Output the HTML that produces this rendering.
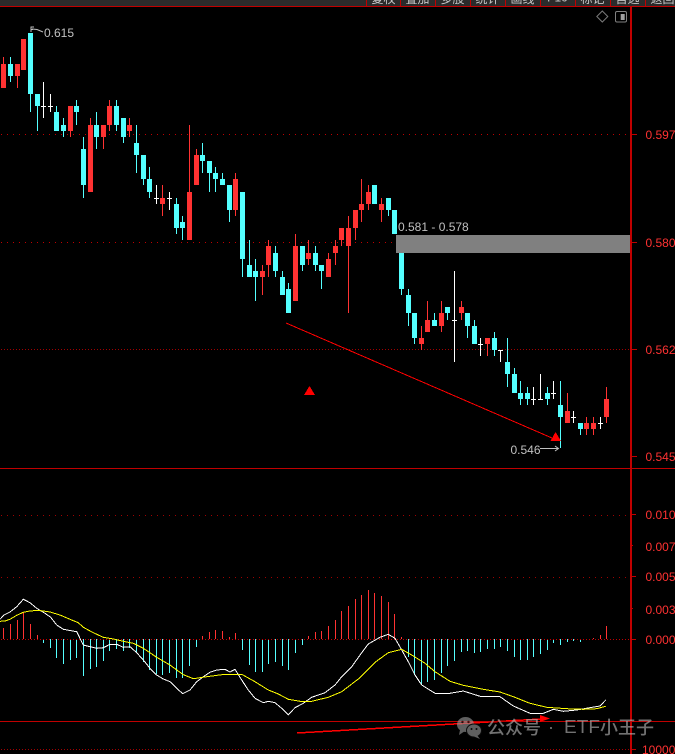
<!DOCTYPE html>
<html>
<head>
<meta charset="utf-8">
<style>
html,body{margin:0;padding:0;background:#000;width:675px;height:754px;overflow:hidden}
svg{display:block}
text{font-family:"Liberation Sans","Noto Sans CJK SC",sans-serif}
</style>
</head>
<body>
<svg width="675" height="754" viewBox="0 0 675 754" xmlns="http://www.w3.org/2000/svg">
<rect width="675" height="754" fill="#000"/>
<!-- top bar -->
<rect width="675" height="6" fill="#2b2b2b"/>
<g font-size="12" fill="#c8c8c8" text-anchor="middle">
<text x="383.5" y="3">复权</text>
<text x="417.5" y="3">叠加</text>
<text x="452.5" y="3">多股</text>
<text x="487.5" y="3">统计</text>
<text x="522.5" y="3">画线</text>
<text x="557.5" y="1.5">F10</text>
<text x="592.5" y="3">标记</text>
<text x="627.5" y="3">自选</text>
<text x="662.5" y="3">返回</text>
</g>
<rect y="6" width="675" height="748" fill="#000"/>
<g shape-rendering="crispEdges">
<rect y="6" width="675" height="1" fill="#c00000"/>
<path d="M366.5 0V6M400.5 0V6M435.5 0V6M470.5 0V6M505.5 0V6M540.5 0V6M575.5 0V6M610.5 0V6M645.5 0V6" stroke="#c00000" fill="none"/>
<!-- grids -->
<g fill="none" stroke="#c00000">
<path d="M1 134.5H630M1 242.5H396" stroke-dasharray="1 5"/>
<path d="M1 349.5H630" stroke-dasharray="1 2" stroke="#a00000"/>
<path d="M1 515.5H630M1 577.5H630" stroke-dasharray="1 5" stroke="#a00000"/>
<path d="M1 749.5H630" stroke-dasharray="1 2" stroke="#a00000"/>
</g>
<!-- grey zone -->
<rect x="396" y="235" width="234" height="18" fill="#808080"/>
<!-- red wicks -->
<path fill="none" stroke="#ff3232" stroke-width="1" d="M3.5 57V88M17.5 64V88M70.5 106V137M90.5 118V192M103.5 125V149M109.5 100V131M129.5 118V137M162.5 185V216M189.5 125V240M196.5 149V185M235.5 173V216M262.5 265V295M268.5 240V277M295.5 234V301M308.5 240V265M328.5 253V277M335.5 240V265M341.5 228V246M348.5 216V313M355.5 210V240M361.5 179V222M368.5 185V210M381.5 198V222M421.5 326V350M427.5 301V332M441.5 301V332M461.5 301V320M487.5 338V356M567.5 393V423M586.5 417V435M593.5 417V435M606.5 387V423"/>
<!-- red bodies -->
<path fill="none" stroke="#ff3232" stroke-width="5" d="M3.5 64V88M17.5 64V76M23.5 39V70M70.5 106V131M90.5 125V192M103.5 125V137M109.5 106V125M129.5 125V131M162.5 198V204M189.5 192V240M196.5 155V185M235.5 179V210M262.5 271V277M268.5 246V265M295.5 246V301M308.5 253V259M328.5 259V277M335.5 246V253M341.5 228V240M348.5 228V246M355.5 210V228M361.5 204V210M368.5 192V204M381.5 204V210M421.5 338V344M427.5 320V332M441.5 313V326M461.5 307V313M487.5 338V344M567.5 411V423M586.5 423V429M593.5 423V429M606.5 399V417"/>
<!-- cyan wicks -->
<path fill="none" stroke="#54ffff" stroke-width="1" d="M10.5 57V82M30.5 33V112M37.5 94V131M56.5 106V131M63.5 118V137M76.5 100V125M83.5 137V198M96.5 112V149M116.5 100V131M123.5 118V143M136.5 125V173M143.5 155V185M149.5 167V198M176.5 198V234M182.5 216V240M202.5 143V173M209.5 161V192M215.5 167V192M222.5 173V185M229.5 185V222M242.5 192V277M249.5 240V277M255.5 259V301M275.5 246V277M282.5 271V295M288.5 283V313M302.5 246V271M315.5 246V271M321.5 265V289M374.5 185V204M388.5 198V216M394.5 210V234M401.5 253V295M408.5 289V326M414.5 313V344M434.5 313V326M447.5 307V320M467.5 313V338M474.5 320V344M494.5 332V356M507.5 338V387M514.5 368V393M520.5 381V405M527.5 387V405M547.5 387V405M560.5 381V448M580.5 423V435"/>
<!-- cyan bodies -->
<path fill="none" stroke="#54ffff" stroke-width="5" d="M10.5 64V76M30.5 33V94M37.5 94V106M56.5 112V131M63.5 125V131M76.5 106V112M83.5 149V185M96.5 125V137M116.5 106V125M123.5 118V137M136.5 143V155M143.5 155V179M149.5 179V192M176.5 204V228M182.5 222V228M202.5 155V161M209.5 161V173M215.5 173V179M222.5 179V185M229.5 185V210M242.5 192V259M249.5 265V277M255.5 271V277M275.5 253V271M282.5 277V295M288.5 289V313M302.5 246V265M315.5 253V265M321.5 265V271M374.5 185V204M388.5 198V210M394.5 210V234M401.5 253V289M408.5 295V313M414.5 313V338M434.5 320V326M447.5 307V313M467.5 313V326M474.5 326V344M494.5 338V350M507.5 362V374M514.5 374V393M520.5 393V399M527.5 393V399M547.5 393V399M560.5 405V417M580.5 423V429"/>
<!-- white doji -->
<path fill="none" stroke="#ffffff" stroke-width="1" d="M43.5 82V118M41 106.5H46M50.5 94V112M48 106.5H53M156.5 185V204M154 198.5H159M169.5 192V210M167 198.5H172M454.5 271V362M452 320.5H457M480.5 338V356M478 344.5H483M500.5 350V362M498 350.5H503M533.5 387V405M531 399.5H536M540.5 374V400M538 399.5H543M553.5 381V399M551 393.5H556M573.5 411V423M571 417.5H576M600.5 417V429M598 423.5H603"/>
<!-- trend line -->
<path fill="none" stroke="#ff0000" d="M286 323L552 438"/>
<path fill="#ff0000" d="M555.5 432L561 441H550.5ZM309.5 386L315 395H304Z"/>
<!-- MACD histogram -->
<path fill="none" stroke="#ff3232" d="M3.5 628V639M10.5 624V639M17.5 620V639M23.5 612V639M30.5 624V639M37.5 635V639M202.5 636V639M209.5 632V639M215.5 630V639M222.5 631V639M229.5 637V639M235.5 633V639M308.5 636V639M315.5 632V639M321.5 631V639M328.5 626V639M335.5 620V639M341.5 611V639M348.5 606V639M355.5 599V639M361.5 595V639M368.5 590V639M374.5 593V639M381.5 596V639M388.5 602V639M394.5 614V639M401.5 637V639M593.5 638V639M600.5 635V639M606.5 626V639"/>
<path fill="none" stroke="#54ffff" d="M43.5 639V643M50.5 639V648M56.5 639V658M63.5 639V664M70.5 639V660M76.5 639V658M83.5 639V676M90.5 639V669M96.5 639V667M103.5 639V661M109.5 639V651M116.5 639V649M123.5 639V651M129.5 639V648M136.5 639V653M143.5 639V662M149.5 639V670M156.5 639V674M162.5 639V675M169.5 639V673M176.5 639V678M182.5 639V678M189.5 639V666M196.5 639V647M242.5 639V650M249.5 639V665M255.5 639V672M262.5 639V672M268.5 639V664M275.5 639V662M282.5 639V666M288.5 639V670M295.5 639V653M302.5 639V645M408.5 639V657M414.5 639V675M421.5 639V685M427.5 639V682M434.5 639V680M441.5 639V673M447.5 639V666M454.5 639V661M461.5 639V652M467.5 639V651M474.5 639V653M480.5 639V652M487.5 639V649M494.5 639V649M500.5 639V647M507.5 639V651M514.5 639V657M520.5 639V660M527.5 639V660M533.5 639V657M540.5 639V654M547.5 639V650M553.5 639V643M560.5 639V645M567.5 639V642M573.5 639V641M580.5 639V642"/>
<path d="M1 639.5H630" fill="none" stroke="#c00000" stroke-dasharray="1 2"/>
<!-- white DIF line -->
<polyline fill="none" stroke="#ffffff" points="0,619.3 4,615 10,612 16.7,606.7 23.3,599.3 30,602.7 36.7,608.3 45,613.3 50.7,617.3 56.7,625 63.3,629.3 76.7,631.7 83.3,645 90,646.7 96.7,648.3 103.3,647.7 110,644.3 116.7,644.3 123.3,647.3 130,646.7 136.7,652.7 143.3,660 150,668.3 156.7,675 163.3,679 170,681.7 176.7,688.3 182.7,693.7 190,690 196.7,681.7 203.3,676.7 210,672.3 216.7,670 225,669.3 230,672 235,669.3 241.7,680 248.3,690 255,698.3 263.3,702.7 268.3,701.3 275,702.7 281.7,708.3 288.3,714.7 295,707.7 303.3,703.3 311.7,697.3 325,692.7 335,685 341.7,676.7 351.7,666.7 361.7,652.7 368.3,644 380,637.3 388.3,634.3 395,638.3 401.7,650 408.3,661.7 415,675 421.7,685 435,693.3 450,693.3 463.3,691 480,696.3 500,696.7 513.3,706 530,713.3 543.3,713.3 553.3,709.3 563.3,711.3 576.7,710 590,707.7 600,706 605.7,700"/>
<!-- yellow DEA line -->
<polyline fill="none" stroke="#ffff00" points="0,621.3 5,621 10,619.3 16.7,615.3 23.3,612.3 30,611 38.3,610.3 50,612 60,615 70,619.3 78.3,622.7 83.3,627.3 93.3,632.7 103.3,637.3 113.3,639 123.3,641.3 133.3,643.3 143.3,648.3 156.7,657.3 170,665 183.3,674.7 193.3,678.7 206.7,676.7 225,674.3 241.7,674.3 255,681.7 268.3,690 278.3,694 288.3,699.3 300,701.3 311.7,701.3 328.3,697.3 341.7,691.7 358.3,679 375,662.3 388.3,652.7 401.7,649.3 411.7,655 425,663.3 435,671.7 450,681.3 463.3,685.3 483.3,689.3 500,692 513.3,696.7 530,703.3 546.7,707.3 566.7,708.7 583.3,709.3 596.7,708.7 605.7,706.3"/>
<!-- lower trend -->
<path fill="none" stroke="#ff0000" stroke-width="1.5" d="M297 733L541 719"/>
<!-- frame -->
<path fill="none" stroke="#c00000" d="M0 468.5H675M0 721.5H675"/>
<path fill="none" stroke="#c00000" d="M631 134.5H637M631 242.5H637M631 349.5H637M631 456.5H637M631 514.5H636M631 545.5H633M631 576.5H636M631 608.5H633M631 639.5H636M631 749.5H636"/>
</g>
<path fill="#ff0000" d="M540 715L550 718.5L540 722Z"/>
<rect x="630" y="7" width="2" height="747" fill="#c00000"/>
<!-- small icons -->
<path fill="none" stroke="#7a7a7a" d="M602.3 11L607.8 16.5L602.3 22L596.8 16.5Z"/>
<rect x="615.5" y="11.5" width="11" height="10.5" rx="1.5" fill="none" stroke="#808080"/>
<rect x="620.7" y="14" width="4" height="6" fill="#a0a0a0"/>
<!-- peak/trough annotations -->
<path fill="none" stroke="#c0c0c0" d="M43 32L37 29.5L32 29M34 27H31V32M31 29.5H33"/>
<path fill="none" stroke="#c0c0c0" d="M540 448.5H558M555 446L558.5 448.5L555 451"/>
<g font-size="12" fill="#c0c0c0">
<text x="44" y="37">0.615</text>
<text x="510.5" y="454">0.546</text>
<text x="398" y="231">0.581 - 0.578</text>
</g>
<!-- axis labels -->
<g font-size="12" fill="#ff3232">
<text x="645.5" y="139">0.597</text>
<text x="645.5" y="247">0.580</text>
<text x="645.5" y="354">0.562</text>
<text x="645.5" y="461">0.545</text>
<text x="645.5" y="519">0.010</text>
<text x="645.5" y="551">0.007</text>
<text x="645.5" y="581">0.005</text>
<text x="645.5" y="614">0.003</text>
<text x="645.5" y="644">0.000</text>
<text x="642" y="754">10000</text>
</g>
<!-- watermark -->
<g opacity="0.62">
<ellipse cx="465.5" cy="724.5" rx="8.5" ry="7.5" fill="#9a9a9a"/>
<path d="M460 730L459 735L465 731Z" fill="#9a9a9a"/>
<ellipse cx="474" cy="730.5" rx="7.5" ry="6.5" fill="#9a9a9a" stroke="#111" stroke-width="1"/>
<path d="M477 735L480 739L474 736.5Z" fill="#9a9a9a"/>
<circle cx="462.5" cy="722" r="1.2" fill="#111"/>
<circle cx="468.5" cy="722" r="1.2" fill="#111"/>
<circle cx="471.5" cy="729" r="1" fill="#111"/>
<circle cx="476.5" cy="729" r="1" fill="#111"/>
<g font-size="18" fill="#b8b8b8" font-weight="500">
<text x="487" y="734">公众号</text>
<text x="548" y="733">·</text>
<text x="564" y="733" textLength="36" lengthAdjust="spacingAndGlyphs">ETF</text>
<text x="600" y="734">小王子</text>
</g>
</g>
</svg>
</body>
</html>
